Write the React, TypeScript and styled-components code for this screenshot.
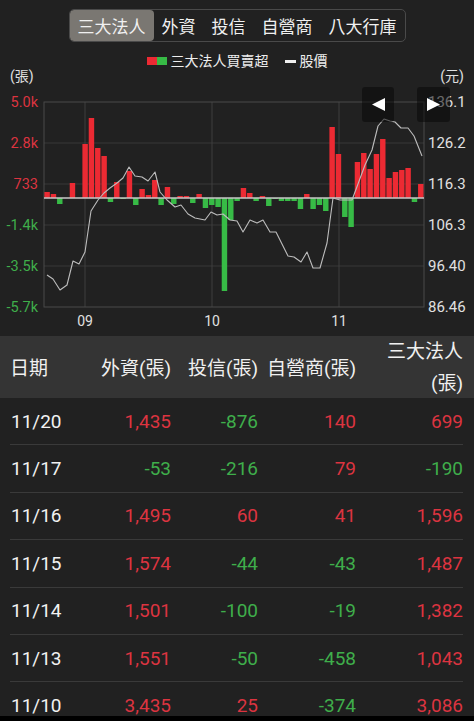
import React from "react";
import styled, { createGlobalStyle } from "styled-components";

const Global = createGlobalStyle`
  html, body { margin: 0; padding: 0; background: #212121; }
  * { box-sizing: border-box; }
`;

const FONT = `Roboto, "Noto Sans CJK TC", "Noto Sans", sans-serif`;
const RED = "#dc3440";
const GREEN = "#3fae4b";
const BAR_RED = "#ec2a33";
const BAR_GREEN = "#37bb46";

const Page = styled.div`
  width: 474px;
  height: 721px;
  display: flex;
  flex-direction: column;
  overflow: hidden;
  background: #212121;
  font-family: ${FONT};
  color: #eeeeee;
`;

const TopBar = styled.div`
  display: flex;
  justify-content: center;
  padding-top: 9px;
`;

const TabGroup = styled.div`
  display: inline-flex;
  height: 33px;
  border: 1px solid #4a4a4a;
  border-radius: 5px;
  overflow: hidden;
`;

const Tab = styled.div<{ $active?: boolean }>`
  display: flex;
  align-items: center;
  padding: 0 8px;
  font-size: 17px;
  color: #f0f0f0;
  background: ${(p) => (p.$active ? "#7a7772" : "transparent")};
  border-radius: ${(p) => (p.$active ? "4px" : "0")};
`;

const Legend = styled.div`
  display: flex;
  justify-content: center;
  align-items: center;
  height: 14px;
  margin-top: 12px;
  font-size: 14px;
  line-height: 14px;
  color: #eeeeee;
`;

const Swatch = styled.span`
  display: inline-block;
  width: 20px;
  height: 8px;
  margin-right: 4px;
  background: linear-gradient(90deg, ${BAR_RED} 50%, ${BAR_GREEN} 50%);
`;

const LineMark = styled.span`
  display: inline-block;
  width: 11px;
  height: 3px;
  background: #f0f0f0;
  margin: 0 4px 0 16px;
`;

const ChartWrap = styled.div`
  position: relative;
  height: 268px;
`;

const NavButton = styled.div<{ $left: number; $width: number }>`
  position: absolute;
  top: 19px;
  left: ${(p) => p.$left}px;
  width: ${(p) => p.$width}px;
  height: 35px;
  border-radius: 3px;
  background: rgba(10, 10, 10, 0.55);
  display: flex;
  align-items: center;
  justify-content: center;
`;

const Table = styled.div`
  flex: 1;
  display: flex;
  flex-direction: column;
  overflow: hidden;
`;

const HeaderRow = styled.div`
  display: grid;
  grid-template-columns: 80px 81px 87px 98px 107px;
  align-items: center;
  height: 62px;
  padding: 0 11px 0 10px;
  background: #343434;
  font-size: 19px;
  color: #f0f0f0;
`;

const HeadCell = styled.div<{ $left?: boolean; $tall?: boolean }>`
  text-align: ${(p) => (p.$left ? "left" : "right")};
  line-height: ${(p) => (p.$tall ? "32px" : "26px")};
  white-space: nowrap;
  margin-top: ${(p) => (p.$tall ? "0" : "2px")};
`;

const Row = styled.div`
  display: grid;
  grid-template-columns: 80px 81px 87px 98px 107px;
  align-items: center;
  flex: 0 0 auto;
  height: 47.4px;
  margin: 0 11px 0 10px;
  border-bottom: 1px solid #3a3a3a;
  font-size: 19px;
`;

const DateCell = styled.div`
  color: #f2f2f2;
  padding-left: 1px;
`;

const NumCell = styled.div<{ $neg: boolean }>`
  text-align: right;
  color: ${(p) => (p.$neg ? GREEN : RED)};
`;

const NavBar = styled.div`
  height: 5px;
  flex: 0 0 5px;
  background: #000;
`;

const bars = [
  6, 4, -6, 0, 15, 0, 54, 80, 50, 42, -4, 16, -1, 27, -7, 9, 3, 18, -7, 11, -6, 2, 2, -5, 4, -10, -7, -9,
  -93, -22, -3, 10, 5, -3, 2, -8, -1, -3, -3, -3, -11, 4, -11, -7, -13, 71, 44, -19, -29, 36, 45, 29, 44,
  59, 20, 26, 28, 30, -4, 14,
];

const price: [number, number][] = [
  [47, 275], [53, 279], [60, 290], [67, 285], [73, 261], [79, 264], [85, 252], [91, 211], [98, 200],
  [104, 193], [110, 188], [117, 183], [123, 178], [129, 167], [135, 176], [142, 177], [148, 181],
  [155, 172], [160, 192], [167, 200], [175, 207], [181, 205], [188, 214], [195, 218], [205, 220],
  [211, 212], [217, 215], [223, 214], [230, 220], [237, 221], [243, 232], [250, 220], [257, 223],
  [263, 220], [270, 232], [276, 232], [288, 256], [294, 257], [301, 262], [307, 252], [313, 268],
  [320, 268], [327, 243], [333, 198], [340, 200], [352, 200], [358, 184], [365, 165], [372, 150],
  [378, 126], [384, 119], [390, 121], [395, 122], [401, 128], [408, 128], [414, 136], [422, 156],
];

const X0 = 44;
const X1 = 424;
const Y0 = 102;
const Y1 = 307;
const ZERO = 198;

const leftLabels = [
  { t: "5.0k", y: 102, c: RED },
  { t: "2.8k", y: 143, c: RED },
  { t: "733", y: 184, c: RED },
  { t: "-1.4k", y: 225, c: GREEN },
  { t: "-3.5k", y: 266, c: GREEN },
  { t: "-5.7k", y: 307, c: GREEN },
];
const rightLabels = ["136.1", "126.2", "116.3", "106.3", "96.40", "86.46"];

function Chart() {
  const w = (X1 - X0) / bars.length;
  return (
    <svg width={474} height={268} viewBox="0 68 474 268" style={{ display: "block" }}>
      <text x={10} y={81} fontSize={14} fill="#e0e0e0" fontFamily={FONT}>
        (張)
      </text>
      <text x={464} y={81} fontSize={14} fill="#e0e0e0" fontFamily={FONT} textAnchor="end">
        (元)
      </text>
      {[143, 184, 225, 266].map((y) => (
        <line key={y} x1={X0} x2={X1} y1={y} y2={y} stroke="#383838" strokeWidth={1} />
      ))}
      {[85, 212, 339].map((x) => (
        <line key={x} x1={x} x2={x} y1={Y0} y2={Y1} stroke="#3e3e3e" strokeWidth={1} />
      ))}
      <rect x={X0} y={Y0} width={X1 - X0} height={Y1 - Y0} fill="none" stroke="#4a4a4a" strokeWidth={1} />
      {bars.map((v, i) => {
        if (v === 0) return null;
        const x = X0 + i * w + 0.4;
        const h = Math.abs(v);
        return (
          <rect
            key={i}
            x={x}
            y={v > 0 ? ZERO - h : ZERO}
            width={w - 0.9}
            height={h}
            fill={v > 0 ? BAR_RED : BAR_GREEN}
          />
        );
      })}
      <line x1={X0} x2={X1} y1={ZERO} y2={ZERO} stroke="#c8c8c8" strokeWidth={1.4} />
      <polyline
        points={price.map((p) => p.join(",")).join(" ")}
        fill="none"
        stroke="#bdbdbd"
        strokeWidth={1.1}
        strokeLinejoin="round"
      />
      {leftLabels.map((l) => (
        <text
          key={l.t}
          x={38}
          y={l.y + 5}
          fontSize={14.5}
          fill={l.c}
          fontFamily={FONT}
          textAnchor="end"
        >
          {l.t}
        </text>
      ))}
      {rightLabels.map((t, i) => (
        <text key={t} x={428} y={102 + i * 41 + 5} fontSize={15} fill="#e0e0e0" fontFamily={FONT}>
          {t}
        </text>
      ))}
      {[
        ["09", 85],
        ["10", 212],
        ["11", 339],
      ].map(([t, x]) => (
        <text key={t} x={x} y={326} fontSize={14} fill="#e0e0e0" fontFamily={FONT} textAnchor="middle">
          {t}
        </text>
      ))}
    </svg>
  );
}

const TriLeft = () => (
  <svg width={13} height={13} viewBox="0 0 13 13">
    <polygon points="0,6.5 13,0 13,13" fill="#ffffff" />
  </svg>
);
const TriRight = () => (
  <svg width={13} height={13} viewBox="0 0 13 13">
    <polygon points="13,6.5 0,0 0,13" fill="#ffffff" />
  </svg>
);

const rows: [string, string, string, string, string][] = [
  ["11/20", "1,435", "-876", "140", "699"],
  ["11/17", "-53", "-216", "79", "-190"],
  ["11/16", "1,495", "60", "41", "1,596"],
  ["11/15", "1,574", "-44", "-43", "1,487"],
  ["11/14", "1,501", "-100", "-19", "1,382"],
  ["11/13", "1,551", "-50", "-458", "1,043"],
  ["11/10", "3,435", "25", "-374", "3,086"],
];

const tabs = ["三大法人", "外資", "投信", "自營商", "八大行庫"];

export default function App() {
  return (
    <Page>
      <Global />
      <TopBar>
        <TabGroup>
          {tabs.map((t, i) => (
            <Tab key={t} $active={i === 0}>
              {t}
            </Tab>
          ))}
        </TabGroup>
      </TopBar>
      <Legend>
        <Swatch />
        三大法人買賣超
        <LineMark />
        股價
      </Legend>
      <ChartWrap>
        <Chart />
        <NavButton $left={362} $width={32}>
          <TriLeft />
        </NavButton>
        <NavButton $left={417} $width={33}>
          <TriRight />
        </NavButton>
      </ChartWrap>
      <Table>
        <HeaderRow>
          <HeadCell $left>日期</HeadCell>
          <HeadCell>外資(張)</HeadCell>
          <HeadCell>投信(張)</HeadCell>
          <HeadCell>自營商(張)</HeadCell>
          <HeadCell $tall>
            三大法人
            <br />
            (張)
          </HeadCell>
        </HeaderRow>
        {rows.map((r) => (
          <Row key={r[0]}>
            <DateCell>{r[0]}</DateCell>
            {r.slice(1).map((v, i) => (
              <NumCell key={i} $neg={v.startsWith("-")}>
                {v}
              </NumCell>
            ))}
          </Row>
        ))}
      </Table>
      <NavBar />
    </Page>
  );
}
